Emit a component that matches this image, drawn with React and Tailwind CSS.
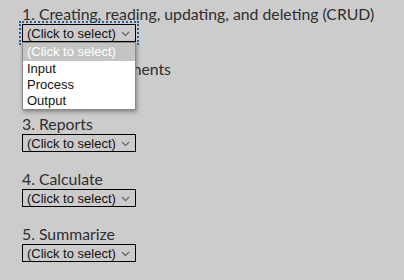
import React from 'react';

const sections = [
    { label: '1. Creating, reading, updating, and deleting (CRUD)', open: true },
    { label: '2. Input requirements' },
    { label: '3. Reports' },
    { label: '4. Calculate' },
    { label: '5. Summarize' },
];

const options = ['(Click to select)', 'Input', 'Process', 'Output'];

function Chevron() {
    return (
        <svg width="9" height="6" viewBox="0 0 9 6" className="ml-[5px] mt-[1px]">
            <path d="M1 1 L4.5 4.5 L8 1" fill="none" stroke="#6b6b6b" strokeWidth="1.3" />
        </svg>
    );
}

function FakeSelect({ open }) {
    return (
        <div className="relative w-[114px]">
            <div
                className={
                    open
                        ? 'outline-2 outline-dotted outline-offset-1 outline-[#2f5f8f]'
                        : ''
                }
            >
                <div className="flex h-[18px] items-center border border-black pl-[4px] text-[13px] leading-none text-[#111]">
                    <span>(Click to select)</span>
                    <Chevron />
                </div>
            </div>
            {open && (
                <ul className="absolute left-0 top-[18px] z-10 w-[114px] border border-[#8a8a8a] bg-white text-[13px] leading-[16px] text-[#111] shadow-[1px_2px_4px_rgba(0,0,0,0.35)]">
                    {options.map((o, i) => (
                        <li
                            key={o}
                            className={
                                i === 0
                                    ? 'h-[18px] bg-[#c4c4c4] pl-[4px] pt-[1px] text-white'
                                    : 'h-[16px] pl-[4px]'
                            }
                        >
                            {o}
                        </li>
                    ))}
                </ul>
            )}
        </div>
    );
}

export default function App() {
    return (
        <div
            className="h-[280px] w-[404px] bg-[#cccccc] pl-[22px] pt-[4px]"
            style={{ fontFamily: '"Liberation Sans", Arial, sans-serif' }}
        >
            {sections.map((s) => (
                <div key={s.label} className="mb-[17px]">
                    <div className="h-[20px] whitespace-nowrap font-['Lato',sans-serif] text-[15.8px] leading-[20px] text-[#2e2e2e]">
                        {s.label}
                    </div>
                    <FakeSelect open={s.open} />
                </div>
            ))}
        </div>
    );
}
